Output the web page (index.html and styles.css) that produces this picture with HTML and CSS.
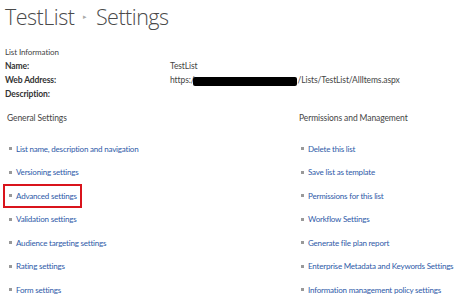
FILE: index.html
```html
<!DOCTYPE html>
<html lang="en">
  <head>
    <meta charset="UTF-8" />
    <meta name="viewport" content="width=device-width, initial-scale=1.0" />
    <link rel="stylesheet" href="styles.css">
    <title>Settings</title>
  </head>
  <body>
    <h1 class="page-title">
      <span>TestList</span>
      <span class="crumb-sep">&#9656;</span>
      <span>Settings</span>
    </h1>

    <div class="list-info">
      <div class="section-label">List Information</div>
      <div class="info-grid">
        <span class="info-key">Name:</span>
        <span class="info-value">TestList</span>
        <span class="info-key">Web Address:</span>
        <span class="info-value">https:/<span class="redacted"></span>/Lists/TestList/AllItems.aspx</span>
        <span class="info-key">Description:</span>
        <span class="info-value"></span>
      </div>
    </div>

    <div class="settings">
      <div class="settings-col">
        <h2 class="col-title">General Settings</h2>
        <ul class="link-list">
          <li class="link-item"><a href="#">List name, description and navigation</a></li>
          <li class="link-item"><a href="#">Versioning settings</a></li>
          <li class="link-item link-item--marked"><a href="#">Advanced settings</a></li>
          <li class="link-item"><a href="#">Validation settings</a></li>
          <li class="link-item"><a href="#">Audience targeting settings</a></li>
          <li class="link-item"><a href="#">Rating settings</a></li>
          <li class="link-item"><a href="#">Form settings</a></li>
        </ul>
      </div>
      <div class="settings-col">
        <h2 class="col-title">Permissions and Management</h2>
        <ul class="link-list">
          <li class="link-item"><a href="#">Delete this list</a></li>
          <li class="link-item"><a href="#">Save list as template</a></li>
          <li class="link-item"><a href="#">Permissions for this list</a></li>
          <li class="link-item"><a href="#">Workflow Settings</a></li>
          <li class="link-item"><a href="#">Generate file plan report</a></li>
          <li class="link-item"><a href="#">Enterprise Metadata and Keywords Settings</a></li>
          <li class="link-item"><a href="#">Information management policy settings</a></li>
        </ul>
      </div>
    </div>
  </body>
</html>
```

FILE: styles.css
```css
h1,
h2 {
  margin: 0;
  padding: 0;
  font-weight: normal;
}

ul {
  margin: 0;
  padding: 0;
  list-style: none;
}

body {
  margin: 0;
  padding: 0 0 0 5px;
  font-family: Lato, "Open Sans", sans-serif;
  font-size: 8px;
  letter-spacing: -0.1px;
  color: #444;
  background: #fff;
  white-space: nowrap;
}

.page-title {
  display: flex;
  align-items: center;
  gap: 9px;
  height: 32px;

  font-family: "Open Sans", sans-serif;
  font-size: 21.5px;
  font-weight: 300;
  color: #4a4a4a;
  letter-spacing: -0.5px;
}

.crumb-sep {
  font-size: 7px;
  color: #aaa;
}

.list-info {
  margin-top: 13px;
}

.section-label {
  line-height: 14px;
}

.info-grid {
  display: grid;
  grid-template-columns: 165px 1fr;
  line-height: 14px;
  font-size: 8.5px;
}

.info-key {
  font-weight: bold;
  color: #333;
}

.redacted {
  display: inline-block;
  width: 104px;
  height: 9px;
  margin: 0 1px -1px -2px;
  vertical-align: middle;
  background: #000;
  border-radius: 2px;
}

.settings {
  display: grid;
  grid-template-columns: 292px 1fr;
  margin-top: 10px;
  padding-left: 2px;
}

.col-title {
  margin-bottom: 12px;
  font-size: 8.5px;
  line-height: 14px;
}

.link-list {
  display: flex;
  flex-direction: column;
}

.link-item {
  box-sizing: border-box;
  display: flex;
  align-items: center;
  gap: 4px;
  height: 23.5px;
  padding-left: 2px;
  letter-spacing: -0.2px;

  &::before {
    content: "";
    width: 3px;
    height: 3px;
    background: #999;
  }

  & a {
    color: #2e5aa8;
    text-decoration: none;
  }
}

.link-item--marked {
  width: 79px;
  margin-left: -4px;
  padding-left: 4px;
  border: 2px solid #d9141c;
}
```
